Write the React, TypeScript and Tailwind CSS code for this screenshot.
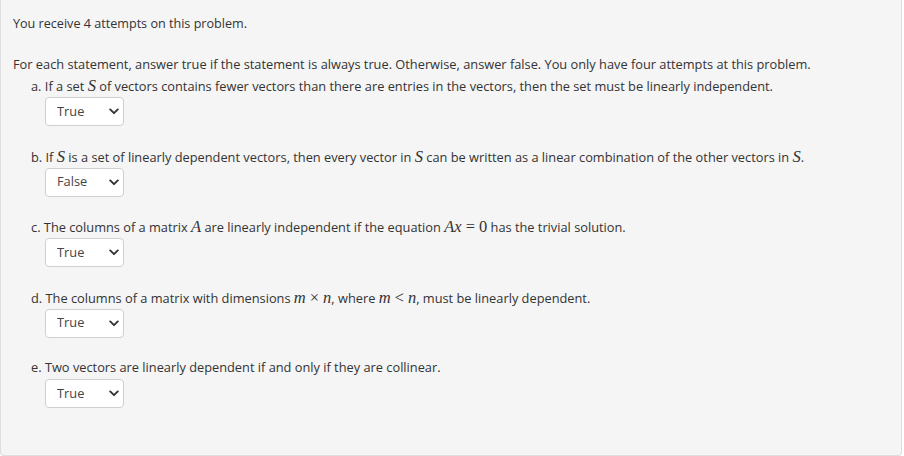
import { FC, ReactNode } from "react";

const serif = '"Liberation Serif", "DejaVu Serif", serif';

const M: FC<{ children: ReactNode }> = ({ children }) => (
  <span className="text-[16.5px] italic" style={{ fontFamily: serif }}>
    {children}
  </span>
);

const N: FC<{ children: ReactNode }> = ({ children }) => (
  <span className="text-[16.5px]" style={{ fontFamily: serif }}>
    {children}
  </span>
);

const Op: FC<{ children: ReactNode }> = ({ children }) => (
  <span className="mx-[4px] text-[16.5px]" style={{ fontFamily: serif }}>
    {children}
  </span>
);

const Chevron = () => (
  <svg width="10" height="7" viewBox="0 0 10 7" className="pointer-events-none absolute right-[5px] top-[11px]">
    <path d="M1.2 1.4 L5 5.2 L8.8 1.4" fill="none" stroke="#333" strokeWidth="1.9" strokeLinecap="round" strokeLinejoin="round" />
  </svg>
);

const AnswerSelect: FC<{ value: string }> = ({ value }) => (
  <div className="relative ml-[14px] h-[29px] w-[79px]">
    <select
      defaultValue={value}
      className="h-full w-full appearance-none rounded-[4px] border border-[#cfcfcf] bg-white pl-[11px] text-[12.8px] text-[#444] outline-none"
    >
      <option value="?">?</option>
      <option value="True">True</option>
      <option value="False">False</option>
    </select>
    <Chevron />
  </div>
);

interface Item {
  label: string;
  text: ReactNode;
  value: string;
}

const items: Item[] = [
  {
    label: "a.",
    text: (
      <>
        If a set <M>S</M> of vectors contains fewer vectors than there are entries in the vectors, then the set must be
        linearly independent.
      </>
    ),
    value: "True",
  },
  {
    label: "b.",
    text: (
      <>
        If <M>S</M> is a set of linearly dependent vectors, then every vector in <M>S</M> can be written as a linear
        combination of the other vectors in <M>S</M>.
      </>
    ),
    value: "False",
  },
  {
    label: "c.",
    text: (
      <>
        The columns of a matrix <M>A</M> are linearly independent if the equation <M>Ax</M>
        <Op>=</Op>
        <N>0</N> has the trivial solution.
      </>
    ),
    value: "True",
  },
  {
    label: "d.",
    text: (
      <>
        The columns of a matrix with dimensions <M>m</M>
        <Op>×</Op>
        <M>n</M>, where <M>m</M>
        <Op>&lt;</Op>
        <M>n</M>, must be linearly dependent.
      </>
    ),
    value: "True",
  },
  {
    label: "e.",
    text: <>Two vectors are linearly dependent if and only if they are collinear.</>,
    value: "True",
  },
];

export default function App() {
  return (
    <div className="h-[456px] w-[904px] bg-white">
      <div
        className="h-[456px] w-[902px] rounded-b-[4px] border border-t-0 border-[#dedede] bg-[#f5f5f5] pl-[12px] pt-[14px] text-[12.8px] text-[#333]"
        style={{ fontFamily: '"Open Sans", "Noto Sans", sans-serif' }}
      >
        <p className="h-[20px] text-[12.6px] leading-[19px]">You receive 4 attempts on this problem.</p>
        <p className="mt-[21px] h-[21px] leading-[19px]">
          For each statement, answer true if the statement is always true. Otherwise, answer false. You only have four
          attempts at this problem.
        </p>
        <ol className="pl-[18px]">
          {items.map((item) => (
            <li key={item.label} className="mb-[20.5px]">
              <div className="h-[21px] whitespace-nowrap leading-[19px]">
                {item.label} {item.text}
              </div>
              <AnswerSelect value={item.value} />
            </li>
          ))}
        </ol>
      </div>
    </div>
  );
}
